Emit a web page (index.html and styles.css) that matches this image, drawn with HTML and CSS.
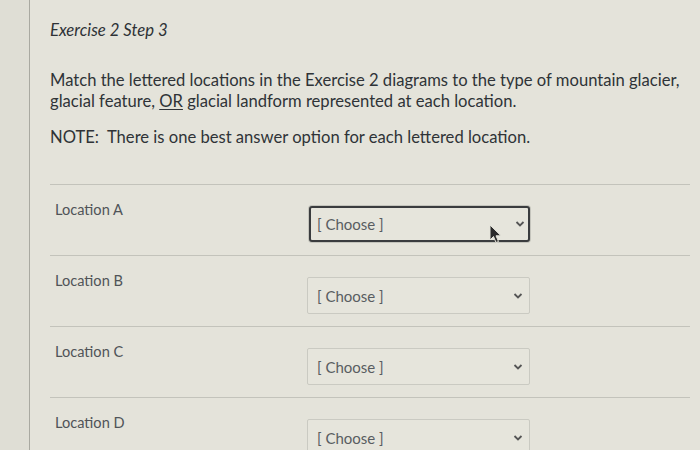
FILE: index.html
```html
<!DOCTYPE html>
<html lang="en">
<head>
<meta charset="utf-8">
<title>Exercise 2 Step 3</title>
<link rel="stylesheet" href="styles.css">
</head>
<body>
<div class="page">
  <aside class="rail"></aside>
  <main class="question">
    <h2 class="q-title">Exercise 2 Step 3</h2>
    <p class="q-text">Match the lettered locations in the Exercise 2 diagrams to the type of mountain glacier, glacial feature, <span class="em-under">OR</span> glacial landform represented at each location.</p>
    <p class="q-text q-note">NOTE:&nbsp; There is one best answer option for each lettered location.</p>

    <div class="answers">
      <div class="answer">
        <span class="answer-label">Location A</span>
        <div class="select select--focus">
          <span class="select-text">[ Choose ]</span>
          <svg class="chevron" viewBox="0 0 10 8" width="10" height="8"><path d="M1.5 2 L5 5.5 L8.5 2" fill="none" stroke="#555" stroke-width="1.8"/></svg>
          <svg class="cursor" viewBox="0 0 14 20" width="14" height="20"><path d="M1 1 L1 16 L4.5 12.5 L7 18.5 L9.5 17.5 L7 11.8 L12 11.8 Z" fill="#2a2a2a" stroke="#e4e3da" stroke-width="1"/></svg>
        </div>
      </div>
      <div class="answer">
        <span class="answer-label">Location B</span>
        <div class="select">
          <span class="select-text">[ Choose ]</span>
          <svg class="chevron" viewBox="0 0 10 8" width="10" height="8"><path d="M1.5 2 L5 5.5 L8.5 2" fill="none" stroke="#555" stroke-width="1.8"/></svg>
        </div>
      </div>
      <div class="answer">
        <span class="answer-label">Location C</span>
        <div class="select">
          <span class="select-text">[ Choose ]</span>
          <svg class="chevron" viewBox="0 0 10 8" width="10" height="8"><path d="M1.5 2 L5 5.5 L8.5 2" fill="none" stroke="#555" stroke-width="1.8"/></svg>
        </div>
      </div>
      <div class="answer">
        <span class="answer-label">Location D</span>
        <div class="select">
          <span class="select-text">[ Choose ]</span>
          <svg class="chevron" viewBox="0 0 10 8" width="10" height="8"><path d="M1.5 2 L5 5.5 L8.5 2" fill="none" stroke="#555" stroke-width="1.8"/></svg>
        </div>
      </div>
    </div>
  </main>
</div>
</body>
</html>
```
FILE: styles.css
```css
html, body {
  margin: 0;
  padding: 0;
  height: 100%;
}

body {
  background: #e4e3da;
  font-family: Lato, "Noto Sans", sans-serif;
  color: #2f3337;
  overflow: hidden;
}

.page {
  display: flex;
  min-height: 450px;
}

.rail {
  width: 29px;
  flex: none;
  background: #dfded5;
  border-right: 1px solid #a9a9a1;
}

.question {
  flex: 1;
  padding: 19px 10px 0 20px;
}

.q-title {
  margin: 0;
  font-size: 16.7px;
  line-height: 22px;
  font-weight: 400;
  font-style: italic;
  color: #2e3236;
}

.q-text {
  margin: 29px 0 0;
  font-size: 16.6px;
  line-height: 21px;
  color: #2f3337;
}

.em-under {
  text-decoration: underline;
  text-underline-offset: 2px;
}

.q-note {
  margin-top: 15px;
}

.answers {
  margin-top: 36px;
}

.answer {
  display: flex;
  align-items: flex-start;
  border-top: 1px solid #c3c3bb;
  height: 70px;
}

.answer-label {
  width: 252px;
  padding: 16px 0 0 5px;
  font-size: 14.6px;
  line-height: 18px;
  color: #505458;
}

.select {
  position: relative;
  margin-top: 21px;
  width: 223px;
  height: 37px;
  box-sizing: border-box;
  border: 1px solid #cacac2;
  border-radius: 2px;
  background: #e6e5dc;
  display: flex;
  align-items: center;
  padding: 0 6px 0 9px;
}

.select--focus {
  border: 2px solid #3a3c3e;
  border-radius: 3px;
  margin-left: 2px;
  width: 221px;
  height: 36px;
  padding: 0 3px 0 6px;
  box-shadow: 0 0 0 1px #c4c4bc;
}

.select-text {
  flex: 1;
  font-size: 15px;
  color: #595d61;
}

.chevron {
  flex: none;
}

.cursor {
  position: absolute;
  left: 178px;
  top: 16px;
}
```
